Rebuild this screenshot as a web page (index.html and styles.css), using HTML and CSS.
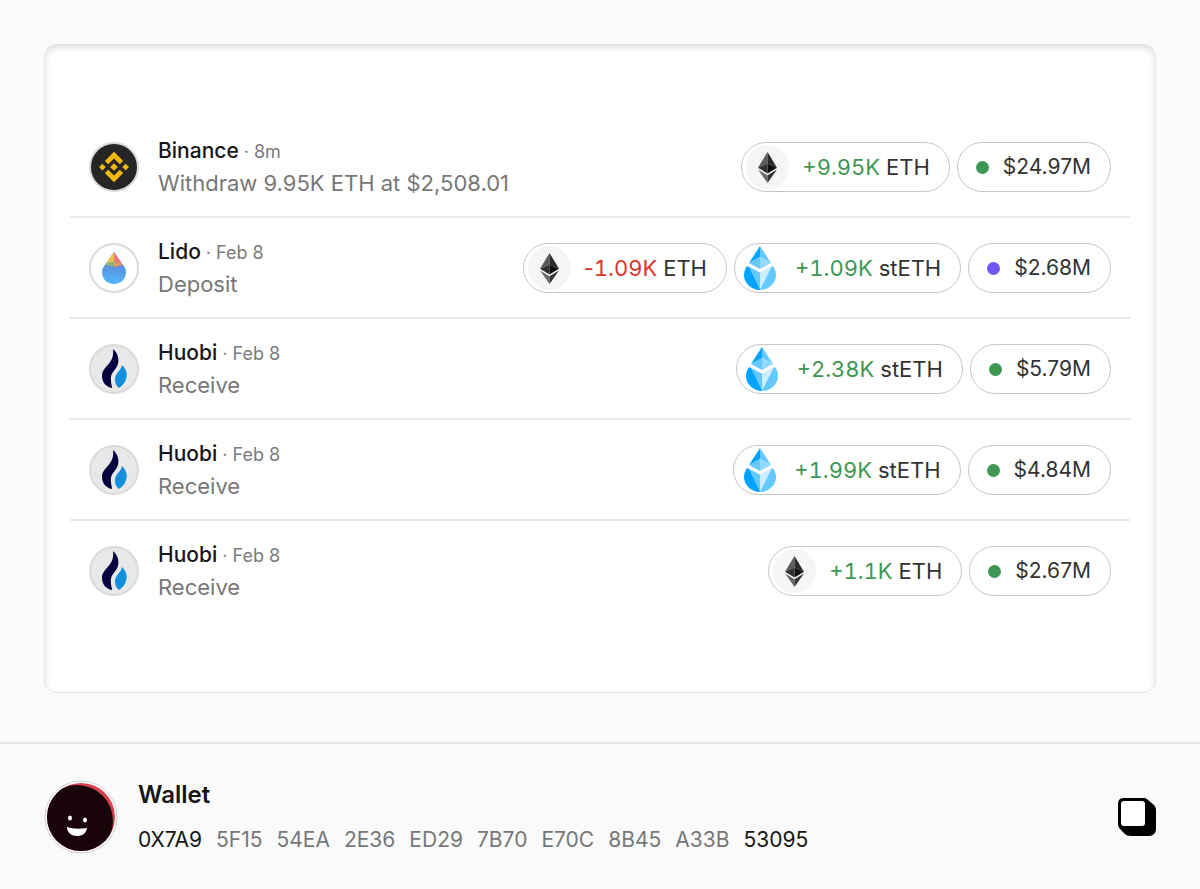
FILE: index.html
```html
<!DOCTYPE html>
<html lang="en">
<head>
<meta charset="utf-8">
<meta name="viewport" content="width=device-width, initial-scale=1">
<title>Wallet activity</title>
<link rel="stylesheet" href="styles.css">
</head>
<body>
<svg class="sprite" aria-hidden="true">
  <symbol id="eth" viewBox="0 0 784 1277">
    <path fill="#5a5a5a" d="M392 0 0 650l392-178z"/>
    <path fill="#2b2b2b" d="M392 0v472l392 178z"/>
    <path fill="#303030" d="M0 650l392 232V472z"/>
    <path fill="#101010" d="M784 650 392 882V472z"/>
    <path fill="#6a6a6a" d="M392 1277V956L0 725z"/>
    <path fill="#353535" d="M392 1277V956l392-231z"/>
  </symbol>
  <symbol id="steth" viewBox="0 0 32 44">
    <path fill="#00a3ff" d="M16 0 5 17l11-6z"/>
    <path fill="#63c9ff" d="M16 0v11l11 6z"/>
    <path fill="#63c9ff" d="M5 17l11-6v12z"/>
    <path fill="#92d9ff" d="M27 17 16 11v12z"/>
    <path fill="#00a3ff" d="M3 20l13 7v17C7 44 0 37 0 29c0-3 1-6 3-9z"/>
    <path fill="#63c9ff" d="M29 20c2 3 3 6 3 9 0 8-7 15-16 15V27z"/>
    <path fill="#63c9ff" d="M5 21l11 6v17z"/>
    <path fill="#cceeff" d="M28 20l-12 7v17z"/>
  </symbol>
  <symbol id="huobi" viewBox="0 0 48 48">
    <path fill="#02003d" d="M23 4c6 5 7 13 3 19-3 4-6 7-5 13 0 3 1 5 1 7-6-1-10-6-10-12C12 21 25 19 23 4z"/>
    <path fill="#148fdc" d="M32 20c4 4 6 9 4 14-1 4-4 7-7 9-3-2-4-5-4-9 0-6 6-8 7-14z"/>
  </symbol>
</svg>

<main class="stage">
  <ul class="card">
    <li class="row">
      <span class="logo logo-dark">
        <svg viewBox="0 0 32 32" class="mark-binance" aria-hidden="true" fill="#f0b90b"><path d="M9.8 13.1 16 6.9l6.2 6.2 3.6-3.6L16-.3 6.2 9.5zM0 16l3.6-3.6L7.2 16l-3.6 3.6zM9.8 18.9 16 25.1l6.2-6.2 3.6 3.6L16 32.3l-9.8-9.8zM24.8 16l3.6-3.6L32 16l-3.6 3.6zM16 11.9l4.1 4.1-4.1 4.1-4.1-4.1z"/></svg>
      </span>
      <div class="info">
        <p class="head"><strong class="name">Binance</strong> <span class="when">· 8m</span></p>
        <p class="note">Withdraw 9.95K ETH at $2,508.01</p>
      </div>
      <div class="pills">
        <span class="pill"><span class="coin coin-eth"><svg class="eth" aria-hidden="true"><use href="#eth"/></svg></span><span><span class="gain">+9.95K</span> ETH</span></span>
        <span class="pill value"><i class="dot"></i>$24.97M</span>
      </div>
    </li>
    <li class="row">
      <span class="logo logo-light">
        <svg viewBox="0 0 24 32" class="mark-lido" aria-hidden="true">
          <defs>
            <linearGradient id="water" x1="0" y1="0" x2="0" y2="1"><stop offset="0.4" stop-color="#5a8fd6"/><stop offset="1" stop-color="#4fb8ff"/></linearGradient>
            <clipPath id="drop"><path d="M12 0l9 13c2 2 3 5 3 7 0 7-5 12-12 12S0 27 0 20c0-2 1-5 3-7z"/></clipPath>
          </defs>
          <g clip-path="url(#drop)">
            <path fill="url(#water)" d="M0 0h24v32H0z"/>
            <path fill="#e6c34b" d="M12 0H0v12l12-2z"/>
            <path fill="#e9787c" d="M12 0h12v12l-12-2z"/>
            <path fill="#8db37f" d="M0 12l12-2v5z"/>
            <path fill="#e39a62" d="M24 12l-12-2v5z"/>
          </g>
        </svg>
      </span>
      <div class="info">
        <p class="head"><strong class="name">Lido</strong> <span class="when">· Feb 8</span></p>
        <p class="note">Deposit</p>
      </div>
      <div class="pills">
        <span class="pill"><span class="coin coin-eth"><svg class="eth" aria-hidden="true"><use href="#eth"/></svg></span><span><span class="loss"><span class="sign">-</span>1.09K</span> ETH</span></span>
        <span class="pill"><span class="coin"><svg class="steth" aria-hidden="true"><use href="#steth"/></svg></span><span><span class="gain">+1.09K</span> stETH</span></span>
        <span class="pill value"><i class="dot dot-violet"></i>$2.68M</span>
      </div>
    </li>
    <li class="row">
      <span class="logo logo-gray"><svg class="mark-huobi" aria-hidden="true"><use href="#huobi"/></svg></span>
      <div class="info">
        <p class="head"><strong class="name">Huobi</strong> <span class="when">· Feb 8</span></p>
        <p class="note">Receive</p>
      </div>
      <div class="pills">
        <span class="pill"><span class="coin"><svg class="steth" aria-hidden="true"><use href="#steth"/></svg></span><span><span class="gain">+2.38K</span> stETH</span></span>
        <span class="pill value"><i class="dot"></i>$5.79M</span>
      </div>
    </li>
    <li class="row">
      <span class="logo logo-gray"><svg class="mark-huobi" aria-hidden="true"><use href="#huobi"/></svg></span>
      <div class="info">
        <p class="head"><strong class="name">Huobi</strong> <span class="when">· Feb 8</span></p>
        <p class="note">Receive</p>
      </div>
      <div class="pills">
        <span class="pill"><span class="coin"><svg class="steth" aria-hidden="true"><use href="#steth"/></svg></span><span><span class="gain">+1.99K</span> stETH</span></span>
        <span class="pill value"><i class="dot"></i>$4.84M</span>
      </div>
    </li>
    <li class="row">
      <span class="logo logo-gray"><svg class="mark-huobi" aria-hidden="true"><use href="#huobi"/></svg></span>
      <div class="info">
        <p class="head"><strong class="name">Huobi</strong> <span class="when">· Feb 8</span></p>
        <p class="note">Receive</p>
      </div>
      <div class="pills">
        <span class="pill"><span class="coin coin-eth"><svg class="eth" aria-hidden="true"><use href="#eth"/></svg></span><span><span class="gain">+1.1K</span> ETH</span></span>
        <span class="pill value"><i class="dot"></i>$2.67M</span>
      </div>
    </li>
  </ul>
</main>

<footer class="wallet">
  <svg class="avatar" viewBox="0 0 74 74" aria-hidden="true">
    <circle cx="37" cy="37" r="36" fill="#fff" stroke="#cfcfcf"/>
    <clipPath id="face"><circle cx="37" cy="37" r="34"/></clipPath>
    <g clip-path="url(#face)">
      <path fill="#d8404f" d="M0 0h74v74H0z"/>
      <circle cx="33" cy="41" r="36" fill="#190509"/>
    </g>
    <ellipse cx="26" cy="38" rx="2" ry="2.5" fill="#fff"/>
    <ellipse cx="41" cy="40" rx="2" ry="2.5" fill="#fff"/>
    <path fill="#fff" d="M23 47c6 2 12 2 20 1-1 6-5 8-10 8s-10-3-10-9z"/>
  </svg>
  <div class="details">
    <h2 class="title">Wallet</h2>
    <p class="address"><b>0X7A9</b> <span>5F15</span> <span>54EA</span> <span>2E36</span> <span>ED29</span> <span>7B70</span> <span>E70C</span> <span>8B45</span> <span>A33B</span> <b>53095</b></p>
  </div>
  <button class="copy" type="button" aria-label="Copy address">
    <svg viewBox="0 0 38 38" width="38" height="38" aria-hidden="true">
      <path d="M6 0h20c2 0 3 1 4 2l6 5c1 1 2 3 2 5v19c0 4-3 7-7 7H13c-3 0-5-1-6-2l-5-5c-1-1-2-3-2-5V6c0-4 2-6 6-6z"/>
      <rect x="3" y="3" width="24" height="25" rx="3" fill="#fff"/>
    </svg>
  </button>
</footer>
</body>
</html>
```

FILE: styles.css
```css
* { box-sizing: border-box; }

body {
  margin: 0;
  background: #fafafa;
  color: #161616;
  font-family: Inter, "Liberation Sans", sans-serif;
  font-size: 21px;
  line-height: 32px;
}

p, h2, ul { margin: 0; padding: 0; }

.sprite { position: absolute; width: 0; height: 0; }

.stage { padding: 44px 44px 49px; }

.card {
  list-style: none;
  padding: 72px 25px 70px;
  background: #fff;
  border: 1px solid #e4e4e4;
  border-radius: 12px;
  box-shadow: inset 0 3px 6px rgba(0, 0, 0, 0.13);
}

.row {
  display: flex;
  align-items: center;
  gap: 19px;
  padding: 18px 19px 17px;
  border-bottom: 2px solid #e8e8e8;
}

.row:last-child { border-bottom-color: transparent; }

.logo {
  display: flex;
  align-items: center;
  justify-content: center;
  flex: none;
  width: 50px;
  height: 50px;
  border: 2px solid #dadada;
  border-radius: 50%;
}

.logo-dark { background: #262626; }
.logo-light { background: #fff; }
.logo-gray { background: #e8e8e8; }

.mark-binance { width: 30px; height: 30px; }
.mark-lido { width: 24px; height: 32px; }
.mark-huobi { width: 48px; height: 48px; flex: none; }

.info { flex: 1; min-width: 0; }
.head { display: flex; align-items: baseline; gap: 5px; height: 32px; }
.name { font-weight: 500; }
.when { color: #7b7b7b; font-size: 18px; }
.note { color: #777; font-size: 22px; }

.pills { display: flex; flex: none; gap: 7px; }

.pill {
  display: flex;
  align-items: center;
  gap: 13px;
  height: 50px;
  padding: 0 19px 0 4px;
  border: 1px solid #c6c6c6;
  border-radius: 25px;
  color: #333;
  font-size: 22px;
  font-variant-numeric: tabular-nums;
}

.sign { font-variant-numeric: normal; }

.value {
  gap: 14px;
  padding-left: 18px;
  font-size: 21px;
  font-variant-numeric: normal;
}

.coin {
  display: flex;
  align-items: center;
  justify-content: center;
  width: 43px;
  height: 44px;
  border-radius: 50%;
}

.coin-eth { background: #f4f5f6; }
.eth { width: 19px; height: 31px; }
.steth { width: 32px; height: 44px; }

.gain { color: #3e9752; }
.loss { color: #dc3528; }

.dot {
  width: 13px;
  height: 13px;
  border-radius: 50%;
  background: #3e9752;
}

.dot-violet { background: #7357f6; }

.wallet {
  display: flex;
  align-items: center;
  gap: 20px;
  padding: 35px 44px;
  border-top: 2px solid #e4e4e4;
}

.avatar { width: 74px; height: 74px; flex: none; }
.details { flex: 1; }
.title { font-size: 24px; font-weight: 600; line-height: 32px; }

.address {
  display: flex;
  flex-wrap: wrap;
  gap: 14px;
  padding-top: 14px;
  color: #777;
  line-height: 30px;
}

.address b { color: #161616; font-weight: 400; }

.copy {
  display: flex;
  padding: 0;
  border: 0;
  background: none;
  cursor: pointer;
}
```
